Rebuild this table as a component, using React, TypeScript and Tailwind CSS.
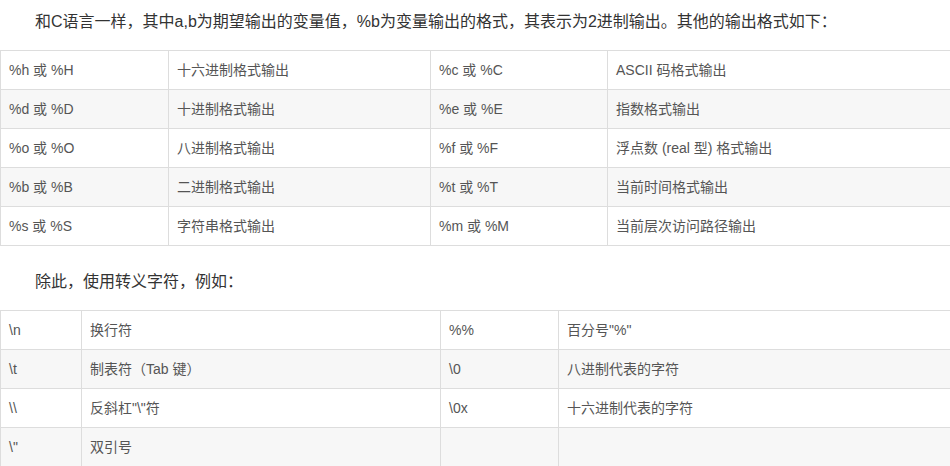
const formats = [
  ['%h 或 %H', '十六进制格式输出', '%c 或 %C', 'ASCII 码格式输出'],
  ['%d 或 %D', '十进制格式输出', '%e 或 %E', '指数格式输出'],
  ['%o 或 %O', '八进制格式输出', '%f 或 %F', '浮点数 (real 型) 格式输出'],
  ['%b 或 %B', '二进制格式输出', '%t 或 %T', '当前时间格式输出'],
  ['%s 或 %S', '字符串格式输出', '%m 或 %M', '当前层次访问路径输出'],
]

const escapes = [
  ['\\n', '换行符', '%%', '百分号"%"'],
  ['\\t', '制表符（Tab 键）', '\\0', '八进制代表的字符'],
  ['\\\\', '反斜杠"\\"符', '\\0x', '十六进制代表的字符'],
  ['\\"', '双引号', '', ''],
]

function Table({ rows, widths }: { rows: string[][]; widths: string[] }) {
  return (
    <table className="table-fixed border-collapse w-[1000px] text-[14px] text-[#555]">
      <colgroup>
        {widths.map((w, i) => (
          <col key={i} className={w} />
        ))}
      </colgroup>
      <tbody>
        {rows.map((row, r) => (
          <tr key={r} className={r % 2 === 1 ? 'bg-[#f7f7f7]' : 'bg-white'}>
            {row.map((cell, c) => (
              <td key={c} className="border border-[#ddd] h-[39px] px-2 py-0 align-middle">
                {cell}
              </td>
            ))}
          </tr>
        ))}
      </tbody>
    </table>
  )
}

export default function App() {
  return (
    <div
      className="w-[950px] h-[466px] overflow-hidden bg-white text-[#333]"
      style={{ fontFamily: '"Liberation Sans", Arial, "Noto Sans CJK SC", sans-serif' }}
    >
      <p className="text-[16px] leading-[26px] pt-[9px] pl-[35px]">
        和C语言一样，其中a,b为期望输出的变量值，%b为变量输出的格式，其表示为2进制输出。其他的输出格式如下：
      </p>
      <div className="mt-[15px]">
        <Table rows={formats} widths={['w-[168px]', 'w-[262px]', 'w-[177px]', 'w-[393px]']} />
      </div>
      <p className="text-[16px] leading-[26px] pt-[23px] pl-[35px]">除此，使用转义字符，例如：</p>
      <div className="mt-[15px]">
        <Table rows={escapes} widths={['w-[81px]', 'w-[359px]', 'w-[118px]', 'w-[442px]']} />
      </div>
    </div>
  )
}
